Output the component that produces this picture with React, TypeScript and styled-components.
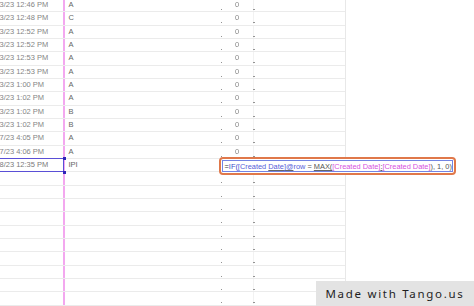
import React from "react";
import styled, { createGlobalStyle, css } from "styled-components";

const Global = createGlobalStyle`
  html, body { margin: 0; padding: 0; background: #ffffff; }
  body { overflow: hidden; font-family: "Liberation Sans", Arial, sans-serif; }
`;

const Page = styled.div`
  position: relative;
  width: 474px;
  height: 306px;
  overflow: hidden;
  background: #fff;
`;

const Sheet = styled.div`
  display: flex;
  flex-direction: column;
  margin-top: -1px;
  width: 345px;
  border-right: 1px solid #e8e8e8;
`;

const Row = styled.div`
  position: relative;
  display: grid;
  grid-template-columns: 65px 156px 33px 91px;
  height: 13.333px;
  flex: 0 0 13.333px;
  box-sizing: border-box;
  border-bottom: 1px solid #ebebeb;
  font-size: 7.5px;
  line-height: 12px;
`;

const DateCell = styled.div<{ $selected?: boolean }>`
  position: relative;
  border-right: 2px solid #f3a8ef;
  color: #858585;
  white-space: nowrap;
  overflow: hidden;
  text-indent: -0.5px;
  ${(p) =>
    p.$selected &&
    css`
      overflow: visible;
      color: #7a7a7a;
      &::after {
        content: "";
        position: absolute;
        left: -2px;
        right: -1px;
        top: -1px;
        bottom: -1px;
        border: 1px solid #5a4fd6;
      }
    `}
`;

const Handle = styled.span<{ $pos: "top" | "bottom" }>`
  position: absolute;
  right: -2.5px;
  width: 3px;
  height: 3px;
  background: #2f25b8;
  z-index: 2;
  ${(p) => (p.$pos === "top" ? "top: -2px;" : "bottom: -2.5px;")}
`;

const TextCell = styled.div`
  padding-left: 3.5px;
  color: #666;
  white-space: nowrap;
`;

const NumCell = styled.div`
  position: relative;
  text-align: center;
  color: #888;
  border-right: 1px solid #f2f2f2;
  will-change: transform;
  &::before,
  &::after {
    content: "";
    position: absolute;
    bottom: 1px;
    width: 1.5px;
    height: 1.5px;
    background: #939393;
  }
  &::before { left: -0.5px; }
  &::after { right: -1.5px; }
`;

const LastCell = styled.div``;

const Editor = styled.div`
  position: absolute;
  left: 219px;
  top: -1.5px;
  width: 237px;
  height: 18px;
  box-sizing: border-box;
  border: 2px solid #e0784a;
  border-radius: 4px;
  background: #fff;
  padding: 1px;
  z-index: 3;
`;

const EditorInner = styled.div`
  height: 100%;
  box-sizing: border-box;
  border: 1px solid #7384e3;
  padding-left: 1.5px;
  font-size: 7.4px;
  line-height: 11.5px;
  white-space: nowrap;
  color: #555;
`;

const Tok = styled.span<{ $c: "plain" | "fn" | "ref" | "pink" | "op"; $u?: boolean }>`
  color: ${(p) =>
    p.$c === "fn"
      ? "#3d4fc9"
      : p.$c === "ref"
      ? "#5660d9"
      : p.$c === "pink"
      ? "#d64fe0"
      : p.$c === "op"
      ? "#333"
      : "#555"};
  ${(p) => p.$u && "text-decoration: underline; text-decoration-color: #666;"}
`;

const Watermark = styled.div`
  position: absolute;
  right: 0;
  bottom: 0;
  width: 158px;
  height: 25px;
  background: #e3e3e3;
  display: flex;
  align-items: center;
  justify-content: center;
  font-family: "Noto Sans", "DejaVu Sans", sans-serif;
  font-size: 11.5px;
  letter-spacing: 1.7px;
  color: #1e1e1e;
  z-index: 5;
`;

type R = { d: string; t: string; n: string };

const data: R[] = [
  { d: "3/23 12:46 PM", t: "A", n: "0" },
  { d: "3/23 12:48 PM", t: "C", n: "0" },
  { d: "3/23 12:52 PM", t: "A", n: "0" },
  { d: "3/23 12:52 PM", t: "A", n: "0" },
  { d: "3/23 12:53 PM", t: "A", n: "0" },
  { d: "3/23 12:53 PM", t: "A", n: "0" },
  { d: "3/23 1:00 PM", t: "A", n: "0" },
  { d: "3/23 1:02 PM", t: "A", n: "0" },
  { d: "3/23 1:02 PM", t: "B", n: "0" },
  { d: "3/23 1:02 PM", t: "B", n: "0" },
  { d: "7/23 4:05 PM", t: "A", n: "0" },
  { d: "7/23 4:06 PM", t: "A", n: "0" },
];

export default function App() {
  const empties = Array.from({ length: 11 });
  return (
    <Page>
      <Global />
      <Sheet>
        {data.map((r, i) => (
          <Row key={i}>
            <DateCell>{r.d}</DateCell>
            <TextCell>{r.t}</TextCell>
            <NumCell>{r.n}</NumCell>
            <LastCell />
          </Row>
        ))}
        <Row>
          <DateCell $selected>
            8/23 12:35 PM
            <Handle $pos="top" />
            <Handle $pos="bottom" />
          </DateCell>
          <TextCell>IPI</TextCell>
          <NumCell />
          <LastCell />
          <Editor>
            <EditorInner>
              <Tok $c="op">=</Tok>
              <Tok $c="fn">IF(</Tok>
              <Tok $c="ref">[Created </Tok>
              <Tok $c="ref" $u>Date]</Tok>
              <Tok $c="ref" $u>@</Tok>
              <Tok $c="ref">row</Tok>
              <Tok $c="plain"> = </Tok>
              <Tok $c="plain" $u>MAX(</Tok>
              <Tok $c="pink">[Created Date]</Tok>
              <Tok $c="op" $u>:</Tok>
              <Tok $c="pink">[Created Date]</Tok>
              <Tok $c="plain">), 1, 0)</Tok>
            </EditorInner>
          </Editor>
        </Row>
        {empties.map((_, i) => (
          <Row key={"e" + i}>
            <DateCell />
            <TextCell />
            <NumCell />
            <LastCell />
          </Row>
        ))}
      </Sheet>
      <Watermark>Made with Tango.us</Watermark>
    </Page>
  );
}
